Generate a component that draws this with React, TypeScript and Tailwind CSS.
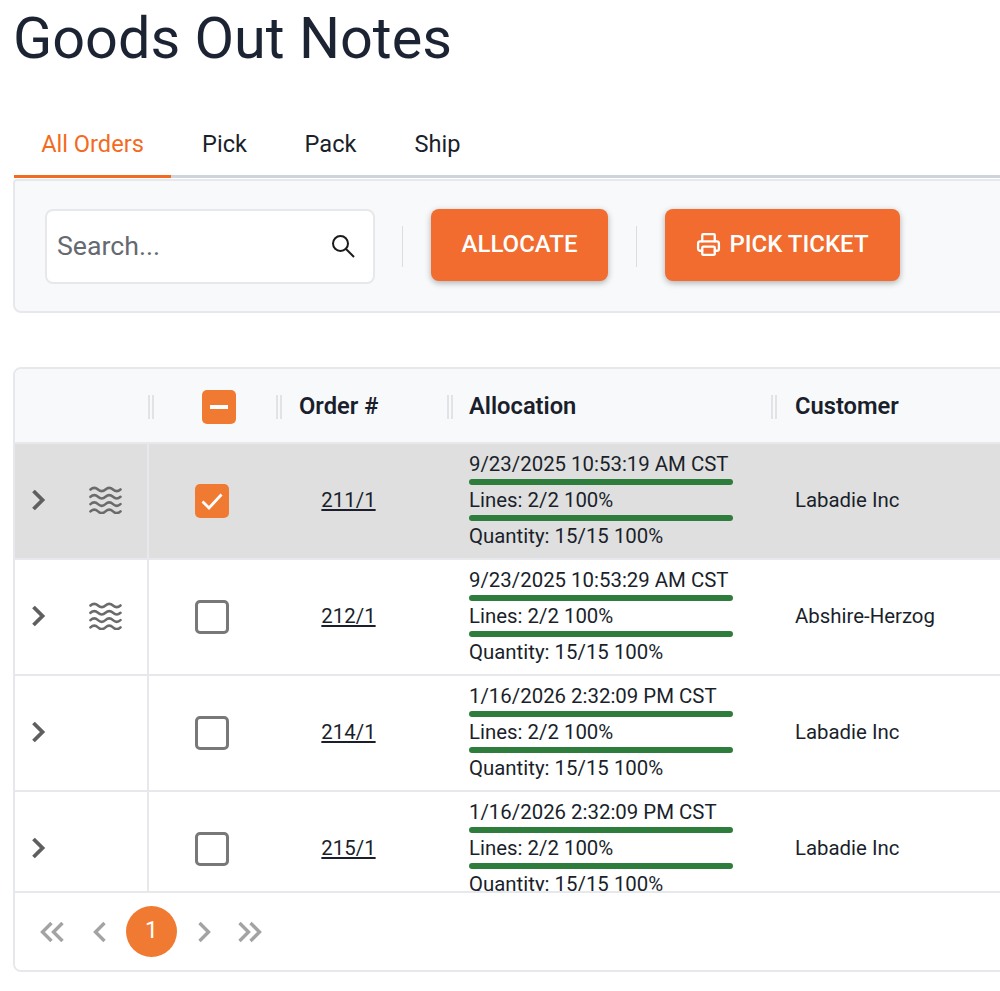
import { Printer } from "lucide-react";

const rows = [
  { id: "211/1", date: "9/23/2025 10:53:19 AM CST", customer: "Labadie Inc", wave: true, checked: true },
  { id: "212/1", date: "9/23/2025 10:53:29 AM CST", customer: "Abshire-Herzog", wave: true, checked: false },
  { id: "214/1", date: "1/16/2026 2:32:09 PM CST", customer: "Labadie Inc", wave: false, checked: false },
  { id: "215/1", date: "1/16/2026 2:32:09 PM CST", customer: "Labadie Inc", wave: false, checked: false },
];

function Waves() {
  const d = (y: number) => `M1.500 ${y}q3.750-3.400 7.500 0t7.500 0 7.500 0 7.500 0`;
  return (
    <svg width="33" height="28" viewBox="0 0 33 28" fill="none" stroke="#6b6b6b" strokeWidth="2.600" strokeLinecap="round">
      <path d={d(3.5)} />
      <path d={d(10.8)} />
      <path d={d(18.1)} />
      <path d={d(25.4)} />
    </svg>
  );
}

function Chevron({ color = "#5f5f5f", flip = false, w = 3.8 }: { color?: string; flip?: boolean; w?: number }) {
  return (
    <svg width="16" height="22" viewBox="0 0 16 22" fill="none" stroke={color} strokeWidth={w} className={flip ? "-scale-x-100" : ""}>
      <path d="M2.500 2 11.500 11 2.500 20" />
    </svg>
  );
}

function Double({ flip = false }: { flip?: boolean }) {
  return (
    <svg width="26" height="22" viewBox="0 0 26 22" fill="none" stroke="#a3a3a3" strokeWidth="3.400" className={flip ? "-scale-x-100" : ""}>
      <path d="M2.500 2 11.500 11 2.500 20" />
      <path d="M13.500 2 22.500 11 13.500 20" />
    </svg>
  );
}

function Grip() {
  return (
    <div className="flex gap-[2px] h-[24px] shrink-0">
      <div className="w-[2px] bg-[#e2e3e6]" />
      <div className="w-[2px] bg-[#e2e3e6]" />
    </div>
  );
}

function Box({ checked }: { checked: boolean }) {
  if (checked) {
    return (
      <div className="w-[34px] h-[34px] rounded-[5px] bg-[#f17a32] flex items-center justify-center">
        <svg width="24" height="24" viewBox="0 0 24 24" fill="none" stroke="white" strokeWidth="2.800">
          <path d="M2.500 12.500 9 19 21.500 5.500" />
        </svg>
      </div>
    );
  }
  return <div className="w-[34px] h-[34px] rounded-[5px] border-[3px] border-[#787878] bg-white" />;
}

function Bar() {
  return <div className="h-[6px] w-[264px] rounded-full bg-[#2e7d3c] my-[1px]" />;
}

export default function App() {
  return (
    <div className="w-[1000px] h-[991px] overflow-hidden bg-white pl-[13px] font-['Roboto',sans-serif] text-[#1a1f2b]">
      <h1 className="text-[57.6px] leading-[78px] text-[#1c2433] font-normal">Goods Out Notes</h1>

      <div className="mt-[34px] ml-[1px] flex w-[1100px] h-[66px] border-b-[3px] border-[#cfd4da] text-[23.6px]">
        <div className="w-[157px] -mb-[3px] border-b-[3px] border-[#f26b21] text-[#f26b21] flex items-center justify-center pt-[3px]">
          All Orders
        </div>
        <div className="w-[107px] flex items-center justify-center pt-[3px]">Pick</div>
        <div className="w-[105px] flex items-center justify-center pt-[3px]">Pack</div>
        <div className="w-[109px] flex items-center justify-center pt-[3px]">Ship</div>
      </div>

      <div className="mt-[1px] w-[1100px] h-[134px] rounded-b-[8px] rounded-t-[4px] border-[2px] border-[#e7e8eb] bg-[#f8f9fb] flex items-center pl-[30px]">
        <div className="w-[330px] h-[75px] rounded-[8px] border-[2px] border-[#e7e8eb] bg-white flex items-center justify-between pl-[10px] pr-[17px]">
          <span className="text-[26.7px] text-[#666a70] pt-[1px]">Search...</span>
          <svg width="26" height="26" viewBox="0 0 26 26" fill="none" stroke="#1a1a1a" strokeWidth="2">
            <circle cx="10.500" cy="10.500" r="7.500" />
            <path d="M16 16l8 8" />
          </svg>
        </div>
        <div className="w-[1px] h-[41px] bg-[#dcdde0] ml-[27px]" />
        <button className="ml-[28px] w-[177px] h-[72px] rounded-[8px] bg-[#f16c2e] text-white text-[24px] font-medium shadow-[0_2px_6px_rgba(0,0,0,0.3)] mb-[2px] pb-[2px]">
          ALLOCATE
        </button>
        <div className="w-[1px] h-[41px] bg-[#dcdde0] ml-[28px]" />
        <button className="ml-[28px] w-[235px] h-[72px] rounded-[8px] bg-[#f16c2e] text-white text-[24px] font-medium shadow-[0_2px_6px_rgba(0,0,0,0.3)] flex items-center justify-center gap-[8px] mb-[2px] pb-[2px]">
          <Printer size={25} strokeWidth={2.2} />
          PICK TICKET
        </button>
      </div>

      <div className="mt-[54px] w-[1100px] h-[605px] rounded-[8px] border-[2px] border-[#e7e8eb] flex flex-col overflow-hidden">
        <div className="h-[73px] shrink-0 bg-[#f8f9fb] flex items-center text-[23.7px] font-semibold pt-[3px]">
          <div className="w-[139px] shrink-0 flex justify-end"><Grip /></div>
          <div className="w-[128px] shrink-0 flex items-center justify-between">
            <div className="ml-[48px] w-[34px] h-[34px] rounded-[5px] bg-[#f17a32] flex items-center justify-center">
              <div className="w-[18px] h-[4px] bg-white" />
            </div>
            <Grip />
          </div>
          <div className="w-[171px] shrink-0 flex items-center justify-between pl-[17px]">
            <span>Order #</span>
            <Grip />
          </div>
          <div className="w-[324px] shrink-0 flex items-center justify-between pl-[16px]">
            <span>Allocation</span>
            <Grip />
          </div>
          <div className="pl-[18px]">Customer</div>
        </div>

        <div className="flex-1 min-h-0 overflow-hidden">
          {rows.map((r) => (
            <div
              key={r.id}
              className={`h-[116px] flex items-center border-t-[2px] border-[#e7e8eb] text-[20.4px] ${r.checked ? "bg-[#dfdfdf]" : "bg-white"}`}
            >
              <div className="w-[134px] h-full shrink-0 border-r-[2px] border-[#e7e8eb] flex items-center pl-[16px] pb-[2px]">
                <Chevron />
                <div className="ml-[42px] w-[34px] flex">{r.wave && <Waves />}</div>
              </div>
              <div className="w-[130px] shrink-0 flex justify-center pr-[4px]">
                <Box checked={r.checked} />
              </div>
              <div className="w-[170px] shrink-0 flex justify-center pr-[31px] pb-[2px]">
                <span className="underline">{r.id}</span>
              </div>
              <div className="w-[326px] shrink-0 pl-[20px] flex flex-col items-start pb-[2px]">
                <span className="leading-[28px]">{r.date}</span>
                <Bar />
                <span className="leading-[28px]">Lines: 2/2 100%</span>
                <Bar />
                <span className="leading-[28px]">Quantity: 15/15 100%</span>
              </div>
              <div className="pl-[20px] pb-[2px]">{r.customer}</div>
            </div>
          ))}
        </div>

        <div className="h-[79px] shrink-0 border-t-[2px] border-[#e7e8eb] bg-white flex items-center pl-[24px]">
          <Double flip />
          <div className="ml-[26px]"><Chevron color="#a3a3a3" flip w={3.4} /></div>
          <div className="ml-[19px] w-[51px] h-[51px] rounded-full bg-[#f17a32] text-white text-[23px] flex items-center justify-center">1</div>
          <div className="ml-[20px]"><Chevron color="#a3a3a3" w={3.4} /></div>
          <div className="ml-[24px]"><Double /></div>
        </div>
      </div>
    </div>
  );
}
